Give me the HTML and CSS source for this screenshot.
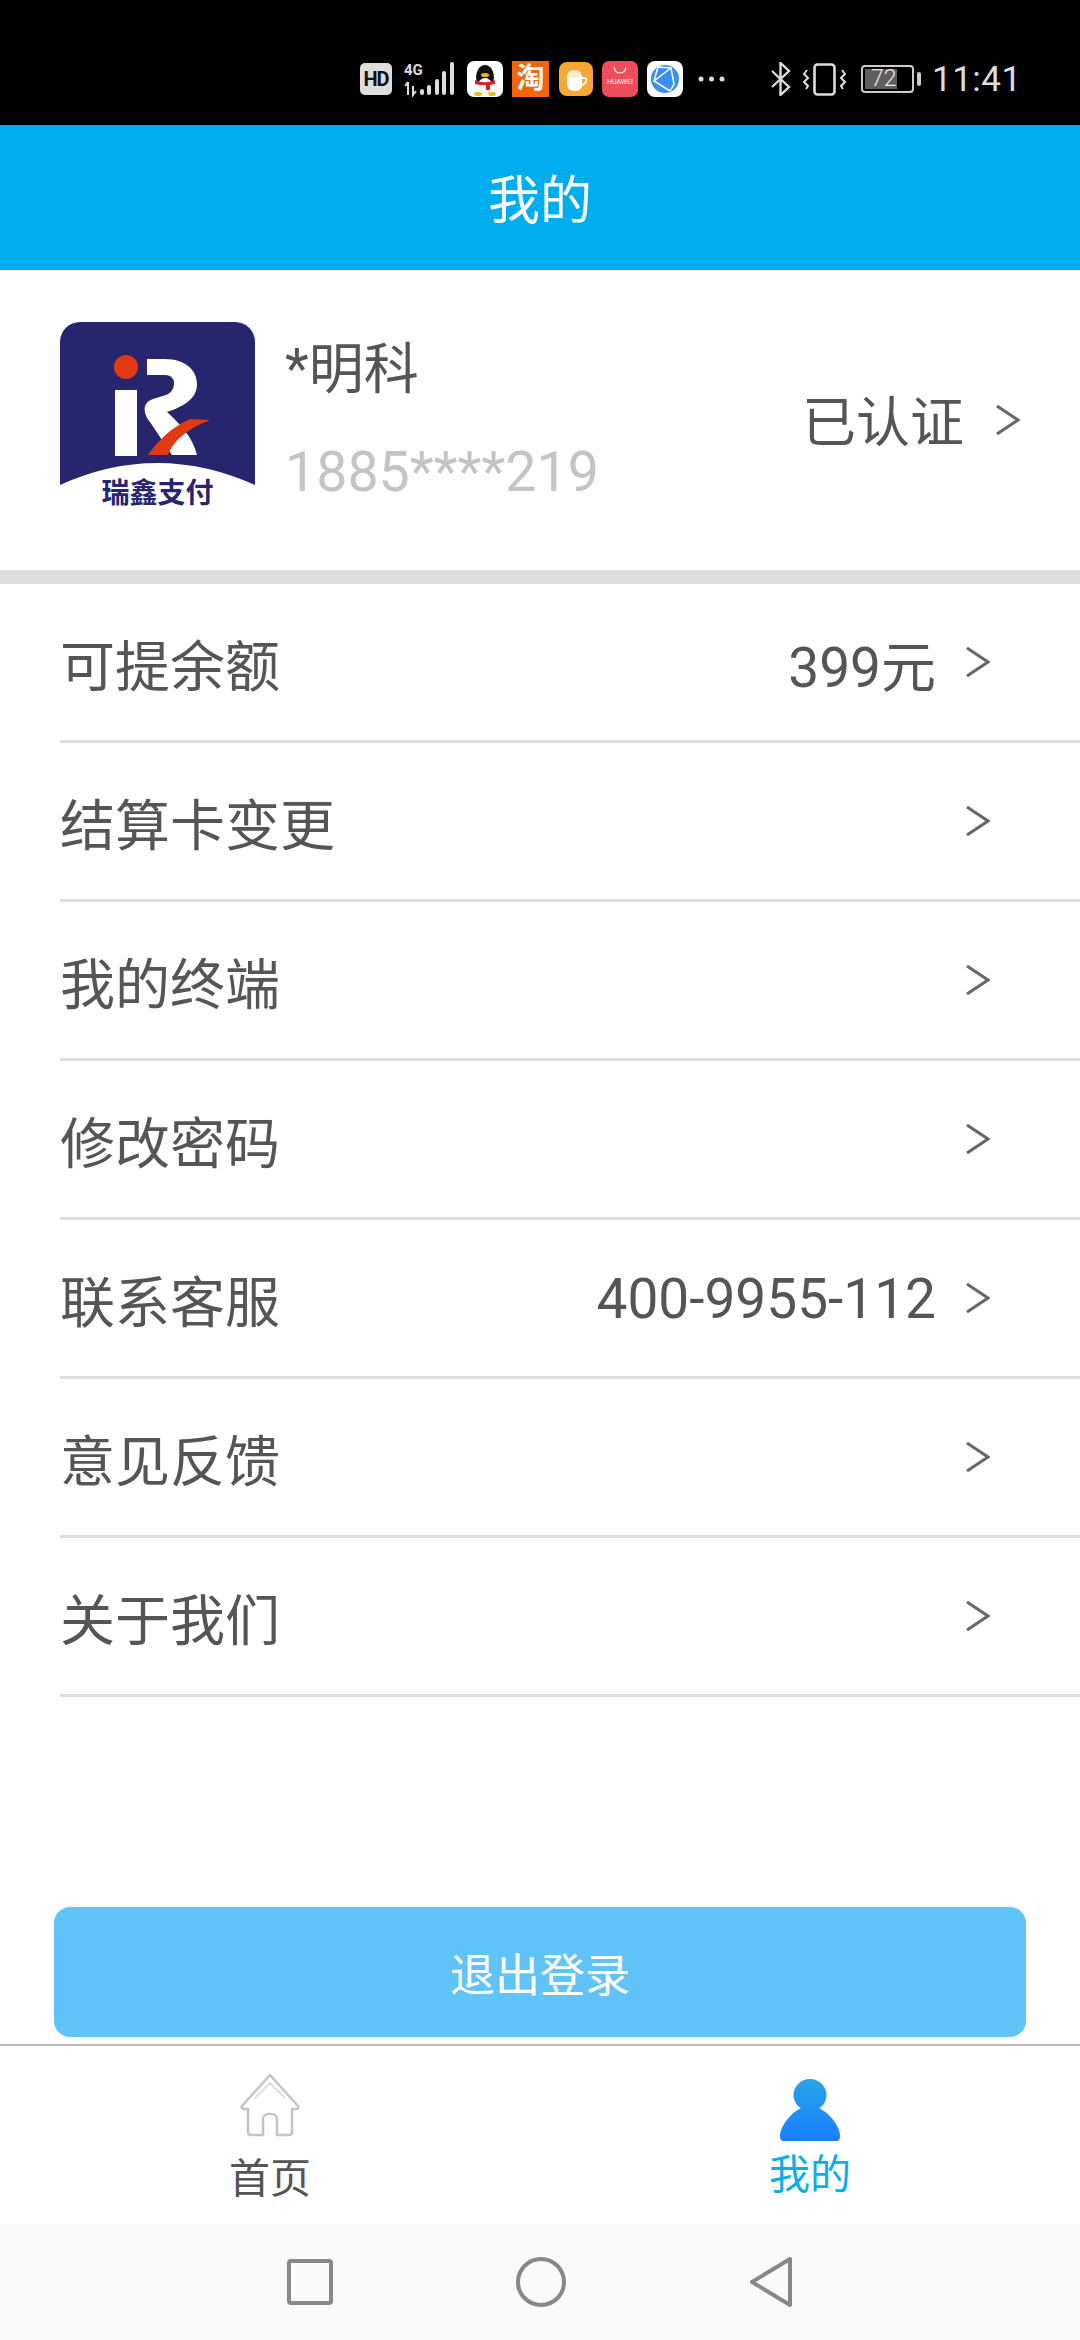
FILE: index.html
```html
<!DOCTYPE html>
<html lang="zh-CN">
<head>
  <meta charset="UTF-8" />
  <meta name="viewport" content="width=device-width, initial-scale=1.0"/>
  <title>我的</title>
  <link rel="stylesheet" href="styles.css">
</head>
<body>
  <div class="statusbar">
    <span class="hd">HD</span>
    <svg class="signal" width="53" height="36" viewBox="0 0 53 36">
      <text x="0" y="14" class="net">4G</text>
      <path d="M4 21v13M1 25l3-4M9 25v9l3-4" class="sig-thin"/>
      <g fill="#ddd">
        <rect x="16" y="28" width="4" height="6" rx="2"/>
        <rect x="23" y="24" width="4" height="10" rx="2"/>
        <rect x="31" y="18" width="4" height="16" rx="2"/>
        <rect x="38" y="10" width="4" height="24" rx="2"/>
        <rect x="46" y="1" width="4" height="33" rx="2"/>
      </g>
    </svg>
    <svg class="app qq" width="36" height="36" viewBox="0 0 36 36">
      <rect width="36" height="36" rx="7" fill="#fff"/>
      <ellipse cx="18" cy="16" rx="9" ry="12" fill="#111"/>
      <ellipse cx="18" cy="25" rx="7" ry="8" fill="#fff"/>
      <ellipse cx="18" cy="14" rx="4" ry="2" fill="#f5b81c"/>
      <path d="M8 19c6 3 14 3 20 0v4l-5 1v5h-4v-5c-4 0-8 0-11-1z" fill="#e02020"/>
      <ellipse cx="11" cy="33" rx="4" ry="2" fill="#f5b81c"/>
      <ellipse cx="25" cy="33" rx="4" ry="2" fill="#f5b81c"/>
    </svg>
    <span class="app tao">淘</span>
    <svg class="app cup" width="34" height="34" viewBox="0 0 34 34">
      <rect width="34" height="34" rx="8" fill="#f7a733"/>
      <path d="M8 13h15v10c0 4-3 6-7 6s-8-2-8-6z" fill="#fff"/>
      <ellipse cx="15.500" cy="12" rx="7" ry="4" fill="#fdeccb"/>
      <path d="M23 16h3c2 0 2 6-3 7" fill="none" stroke="#fff" stroke-width="2"/>
    </svg>
    <span class="app huawei">
      <svg width="14" height="7" viewBox="0 0 14 7"><path d="M1 0c1 8 11 8 12 0" fill="none" stroke="#fff" stroke-width="1.200"/></svg>
      <em>HUAWEI</em>
    </span>
    <svg class="app" width="36" height="36" viewBox="0 0 36 36">
      <rect width="36" height="36" rx="8" fill="#fff"/>
      <circle cx="18" cy="18" r="14" fill="#3a8ff0"/>
      <path d="M11 6l-4 14 16 10M7 20l17-13M11 6l13 1 3 16-4 7" fill="none" stroke="#fff" stroke-width="1.500"/>
    </svg>
    <svg class="more" width="27" height="6" viewBox="0 0 27 6">
      <circle cx="3" cy="3" r="2.500"/><circle cx="13.500" cy="3" r="2.500"/><circle cx="24" cy="3" r="2.500"/>
    </svg>
    <svg class="bt" width="21" height="34" viewBox="0 0 21 34">
      <path d="M2 9l17 16-8.500 8V1L19 9 2 25" fill="none" stroke="#ddd" stroke-width="2.400"/>
    </svg>
    <svg class="vibrate" width="43" height="33" viewBox="0 0 43 33">
      <rect x="11.500" y="1.500" width="20" height="30" rx="3" fill="none" stroke="#ddd" stroke-width="2.600"/>
      <path d="M4 7l-3 4 4 4-4 4 4 4-2 3M39 7l3 4-4 4 4 4-4 4 2 3" fill="none" stroke="#ddd" stroke-width="2"/>
    </svg>
    <span class="battery"><span class="level">72</span></span>
    <span class="nib"></span>
    <span class="clock">11:41</span>
  </div>

  <div class="header">我的</div>

  <div class="profile">
    <svg class="logo" width="195" height="190" viewBox="0 0 195 190">
      <path d="M0 20a20 20 0 0 1 20-20H175a20 20 0 0 1 20 20V163Q97 119 0 163Z" fill="#28256f"/>
      <circle cx="66" cy="45" r="12" fill="#e03a12"/>
      <rect x="55" y="68" width="22" height="66" fill="#fff"/>
      <path d="M87 37H105C125 37 137 48 137 62C137 76 125 84 107 90C118 100 133 115 137 133H112L90 100C82 90 83 80 93 77L106 73C116 70 118 53 105 53H87Z" fill="#fff"/>
      <path d="M88 133H108C113 120 125 108 150 98L130 97C112 105 98 118 88 133Z" fill="#e03a12"/>
      <text x="97.500" y="181" text-anchor="middle" class="logo-text">瑞鑫支付</text>
    </svg>
    <div class="who">
      <div class="name">*明科</div>
      <div class="phone">1885****219</div>
    </div>
    <div class="verified">已认证</div>
    <svg class="chevron" width="24" height="30" viewBox="0 0 24 30"><path d="M1 1l21 14L1 29" /></svg>
  </div>

  <div class="menu">
    <div class="row"><span class="label">可提余额</span><span class="value">399元</span><svg class="chevron" width="24" height="30" viewBox="0 0 24 30"><path d="M1 1l21 14L1 29" /></svg></div>
    <div class="row"><span class="label">结算卡变更</span><svg class="chevron" width="24" height="30" viewBox="0 0 24 30"><path d="M1 1l21 14L1 29" /></svg></div>
    <div class="row"><span class="label">我的终端</span><svg class="chevron" width="24" height="30" viewBox="0 0 24 30"><path d="M1 1l21 14L1 29" /></svg></div>
    <div class="row"><span class="label">修改密码</span><svg class="chevron" width="24" height="30" viewBox="0 0 24 30"><path d="M1 1l21 14L1 29" /></svg></div>
    <div class="row"><span class="label">联系客服</span><span class="value">400-9955-112</span><svg class="chevron" width="24" height="30" viewBox="0 0 24 30"><path d="M1 1l21 14L1 29" /></svg></div>
    <div class="row"><span class="label">意见反馈</span><svg class="chevron" width="24" height="30" viewBox="0 0 24 30"><path d="M1 1l21 14L1 29" /></svg></div>
    <div class="row"><span class="label">关于我们</span><svg class="chevron" width="24" height="30" viewBox="0 0 24 30"><path d="M1 1l21 14L1 29" /></svg></div>
  </div>

  <button class="logout">退出登录</button>

  <div class="tabbar">
    <div class="tab">
      <svg width="60" height="64" viewBox="0 0 60 64">
        <path d="M30 2L58 33c1 2 0 3-3 3H52V59c0 2-1 3-3 3H37V46c0-7-14-7-14 0V62H11c-2 0-3-1-3-3V36H5c-3 0-4-1-3-3Z" fill="none" stroke="#c4c4c4" stroke-width="2.500" stroke-linejoin="round"/>
        <path d="M15 25L30 10 45 25" fill="none" stroke="#d4d4d4" stroke-width="1.500"/>
      </svg>
      <span>首页</span>
    </div>
    <div class="tab active">
      <svg width="62" height="62" viewBox="0 0 62 62">
        <defs>
          <linearGradient id="person" gradientUnits="userSpaceOnUse" x1="0" y1="0" x2="0" y2="62">
            <stop offset="0" stop-color="#27a6e8"/>
            <stop offset="1" stop-color="#1a7eff"/>
          </linearGradient>
        </defs>
        <ellipse cx="31" cy="16" rx="16.500" ry="16" fill="url(#person)"/>
        <path d="M31 27C46 27 61 46 61 57C61 60 60 62 57 62H5C2 62 1 60 1 57C1 46 16 27 31 27Z" fill="url(#person)"/>
      </svg>
      <span>我的</span>
    </div>
  </div>

  <div class="navbar">
    <svg width="46" height="46" viewBox="0 0 46 46"><rect x="2" y="2" width="42" height="42" rx="2"/></svg>
    <svg width="50" height="50" viewBox="0 0 50 50"><circle cx="25" cy="25" r="23"/></svg>
    <svg width="44" height="50" viewBox="0 0 44 50"><path d="M41 2V48L3 25Z"/></svg>
  </div>
</body>
</html>
```

FILE: styles.css
```css
* {
  box-sizing: border-box;
}

body {
  margin: 0;
  width: 1080px;
  height: 2340px;
  display: flex;
  flex-direction: column;
  overflow: hidden;
  background-color: #fff;
  color: #555;
  font-family: Roboto, "Noto Sans CJK SC", sans-serif;
}

/* status bar */
.statusbar {
  height: 125px;
  flex-shrink: 0;
  background-color: #000;
  color: #ddd;
  display: flex;
  align-items: center;
  padding: 33px 0 0 360px;
}

.hd {
  width: 32px;
  height: 32px;
  border-radius: 5px;
  background-color: #ddd;
  color: #111;
  font-size: 20px;
  font-weight: 700;
  line-height: 32px;
  text-align: center;
  letter-spacing: -1px;
}

.signal {
  margin-left: 12px;
}

.net {
  font-size: 15px;
  font-weight: 700;
  fill: #ddd;
}

.sig-thin {
  fill: none;
  stroke: #ddd;
  stroke-width: 2;
}

.app {
  margin-left: 9px;
  flex-shrink: 0;
}

.qq {
  margin-left: 10px;
}

.cup {
  margin-left: 10px;
}

.tao {
  width: 37px;
  height: 36px;
  background-color: #f2650a;
  color: #fff;
  font-size: 28px;
  font-weight: 700;
  line-height: 36px;
  text-align: center;
}

.huawei {
  width: 36px;
  height: 36px;
  border-radius: 7px;
  background-color: #ef4c5c;
  color: #fff;
  display: flex;
  flex-direction: column;
  align-items: center;
  padding-top: 6px;
}

.huawei svg {
  display: block;
}

.huawei em {
  font-size: 7px;
  font-style: normal;
  line-height: 12px;
  margin-top: 2px;
}

.more {
  margin-left: 15px;
  flex-shrink: 0;
  fill: #ddd;
}

.bt {
  margin-left: 45px;
  flex-shrink: 0;
}

.vibrate {
  margin-left: 12px;
  flex-shrink: 0;
}

.battery {
  width: 53px;
  height: 28px;
  margin-left: 15px;
  flex-shrink: 0;
  border: 2px solid #ccc;
  border-radius: 4px;
  padding: 2px;
  display: flex;
}

.level {
  width: 72%;
  background-color: #5e5e5e;
  color: #e8e8e8;
  font-size: 23px;
  line-height: 20px;
  font-weight: 300;
  text-indent: 6px;
  white-space: nowrap;
}

.nib {
  width: 4px;
  height: 14px;
  margin-left: 3px;
  flex-shrink: 0;
  border-radius: 2px;
  background-color: #ccc;
}

.clock {
  margin-left: 11px;
  font-size: 35px;
  letter-spacing: 0.500px;
  white-space: nowrap;
}

/* title */
.header {
  height: 145px;
  flex-shrink: 0;
  background-color: #00aeef;
  color: #fff;
  font-size: 52px;
  line-height: 154px;
  text-align: center;
}

/* profile */
.profile {
  height: 300px;
  flex-shrink: 0;
  display: flex;
  align-items: center;
  padding: 0 60px;
}

.logo {
  flex-shrink: 0;
  margin-top: -6px;
}

.logo-text {
  font-size: 28px;
  font-weight: 700;
  fill: #28256f;
}

.who {
  flex: 1;
  margin-left: 30px;
  padding-top: 2px;
}

.name {
  font-size: 55px;
  line-height: 70px;
  margin-bottom: 34px;
}

.phone {
  font-size: 55.500px;
  line-height: 70px;
  color: #c4c4c4;
}

.verified {
  font-size: 54px;
  margin: 0 32px 4px 0;
}

.chevron {
  flex-shrink: 0;
  fill: none;
  stroke: #666;
  stroke-width: 3;
}

/* list */
.menu {
  flex-shrink: 0;
  border-top: 14px solid #ddd;
}

.row {
  height: 159px;
  margin-left: 60px;
  padding-right: 90px;
  border-bottom: 3px solid #ddd;
  display: flex;
  align-items: center;
  font-size: 55px;
}

.label {
  flex: 1;
}

.value {
  margin: 2px 30px 0 0;
}

/* button + tabs */
.logout {
  height: 130px;
  flex-shrink: 0;
  margin: auto 54px 7px;
  border: none;
  border-radius: 16px;
  background-color: #60c4f9;
  color: #fff;
  font-family: inherit;
  font-size: 45px;
}

.tabbar {
  height: 180px;
  flex-shrink: 0;
  display: grid;
  grid-template-columns: 1fr 1fr;
  border-top: 2px solid #bbb;
}

.tab {
  display: flex;
  flex-direction: column;
  align-items: center;
  padding-top: 27px;
  font-size: 41px;
  line-height: 48px;
  color: #555;
}

.tab svg {
  display: block;
  margin-bottom: 18px;
}

.tab.active {
  padding-top: 33px;
  color: #0aaee8;
}

.tab.active svg {
  margin-bottom: 10px;
}

.navbar {
  height: 116px;
  flex-shrink: 0;
  background-color: #fafafa;
  display: grid;
  grid-template-columns: 46px 50px 44px;
  column-gap: 183px;
  justify-content: center;
  align-items: center;
}

.navbar svg {
  fill: none;
  stroke: #888;
  stroke-width: 4;
  stroke-linejoin: round;
}
```
